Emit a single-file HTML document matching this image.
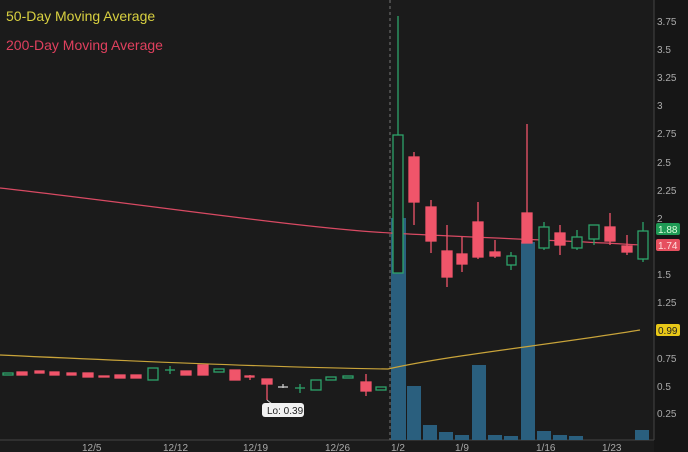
<!DOCTYPE html><html><head><style>body{margin:0;background:#1b1b1b}svg{display:block}text{font-family:"Liberation Sans",sans-serif}</style></head><body>
<svg width="688" height="452" viewBox="0 0 688 452">
<rect width="688" height="452" fill="#1b1b1b"/>
<rect x="654" y="0" width="34" height="452" fill="#161616"/>
<line x1="654" y1="0" x2="654" y2="440" stroke="#444" stroke-width="1"/>
<line x1="0" y1="440" x2="654" y2="440" stroke="#444"/>
<line x1="390" y1="0" x2="390" y2="440" stroke="#777" stroke-dasharray="3,3"/>
<g fill="#2a5f7e">
<rect x="391" y="218" width="15" height="222"/><rect x="407" y="386" width="14" height="54"/><rect x="423" y="425" width="14" height="15"/><rect x="439" y="432" width="14" height="8"/><rect x="455" y="435" width="14" height="5"/><rect x="472" y="365" width="14" height="75"/><rect x="488" y="435" width="14" height="5"/><rect x="504" y="436" width="14" height="4"/><rect x="521" y="242" width="14" height="198"/><rect x="537" y="431" width="14" height="9"/><rect x="553" y="435" width="14" height="5"/><rect x="569" y="436" width="14" height="4"/><rect x="635" y="430" width="14" height="10"/>
</g>
<path d="M0,188 C150,205 300,228 390,233 S560,240 640,245" stroke="#d94a63" fill="none" stroke-width="1.2"/>
<path d="M0,355 C150,362 300,368 388,369 C450,355 550,345 640,330" stroke="#c9a43a" fill="none" stroke-width="1.2"/>
<g stroke="#2ea36a" fill="none" stroke-width="1.3">
<line x1="398" y1="16" x2="398" y2="273"/><rect x="393" y="135" width="10" height="138" fill="#1b1b1b"/>
<line x1="511" y1="252" x2="511" y2="270"/><rect x="507" y="256" width="9" height="9" fill="#1b1b1b"/>
<line x1="544" y1="222" x2="544" y2="250"/><rect x="539" y="227" width="10" height="21" fill="#1b1b1b"/>
<line x1="577" y1="230" x2="577" y2="250"/><rect x="572" y="237" width="10" height="11" fill="#1b1b1b"/>
<line x1="594" y1="225" x2="594" y2="245"/><rect x="589" y="225" width="10" height="14" fill="#1b1b1b"/>
<line x1="643" y1="222" x2="643" y2="262"/><rect x="638" y="231" width="10" height="28" fill="#1b1b1b"/>
<rect x="148" y="368" width="10" height="12" fill="#1b1b1b"/><line x1="165" y1="370" x2="175" y2="370"/><line x1="170" y1="366" x2="170" y2="374"/>
<rect x="214" y="369" width="10" height="3"/><line x1="295" y1="388" x2="305" y2="388"/><line x1="300" y1="384" x2="300" y2="393"/>
<rect x="311" y="380" width="10" height="10" fill="#1b1b1b"/><rect x="326" y="377" width="10" height="3"/><rect x="343" y="376" width="10" height="2"/><rect x="376" y="387" width="10" height="3"/>
<rect x="3" y="373" width="10" height="2"/><line x1="283" y1="388" x2="283" y2="384" stroke="#ccc"/><line x1="278" y1="387" x2="288" y2="387" stroke="#ccc"/>
</g>
<g fill="#f0556a" stroke="#f0556a" stroke-width="1.3">
<line x1="414" y1="152" x2="414" y2="225"/><rect x="409" y="157" width="10" height="45"/>
<line x1="431" y1="200" x2="431" y2="253"/><rect x="426" y="207" width="10" height="34"/>
<line x1="447" y1="225" x2="447" y2="287"/><rect x="442" y="251" width="10" height="26"/>
<line x1="462" y1="237" x2="462" y2="272"/><rect x="457" y="254" width="10" height="10"/>
<line x1="478" y1="202" x2="478" y2="259"/><rect x="473" y="222" width="10" height="35"/>
<line x1="495" y1="240" x2="495" y2="258"/><rect x="490" y="252" width="10" height="4"/>
<line x1="527" y1="124" x2="527" y2="243"/><rect x="522" y="213" width="10" height="30"/>
<line x1="560" y1="225" x2="560" y2="255"/><rect x="555" y="233" width="10" height="12"/>
<line x1="610" y1="213" x2="610" y2="245"/><rect x="605" y="227" width="10" height="14"/>
<line x1="627" y1="235" x2="627" y2="255"/><rect x="622" y="246" width="10" height="6"/>
<rect x="17" y="372" width="10" height="3"/><rect x="35" y="371" width="9" height="2"/><rect x="50" y="372" width="9" height="3"/><rect x="67" y="373" width="9" height="2"/><rect x="83" y="373" width="10" height="4"/><rect x="99" y="376" width="10" height="1"/><rect x="115" y="375" width="10" height="3"/><rect x="131" y="375" width="10" height="3"/>
<rect x="181" y="371" width="10" height="4"/><rect x="198" y="365" width="10" height="10"/><rect x="230" y="370" width="10" height="10"/><line x1="250" y1="375" x2="250" y2="380"/><rect x="245" y="376" width="9" height="1"/>
<line x1="267" y1="380" x2="267" y2="400"/><rect x="262" y="379" width="10" height="5"/>
<line x1="366" y1="374" x2="366" y2="396"/><rect x="361" y="382" width="10" height="9"/>
</g>
<line x1="267" y1="400" x2="272" y2="404" stroke="#ccc"/>
<rect x="262" y="403" width="42" height="14" rx="3" fill="#f2f2f2"/>
<text x="267" y="414" font-size="10" fill="#222">Lo: 0.39</text>
<text x="6" y="21" font-size="14" fill="#d8d040">50-Day Moving Average</text>
<text x="6" y="50" font-size="14" fill="#e0405e">200-Day Moving Average</text>
<g font-size="10" fill="#aaa">
<text x="657" y="25">3.75</text><text x="657" y="53">3.5</text><text x="657" y="81">3.25</text><text x="657" y="109">3</text><text x="657" y="137">2.75</text><text x="657" y="166">2.5</text><text x="657" y="194">2.25</text><text x="657" y="222">2</text><text x="657" y="278">1.5</text><text x="657" y="306">1.25</text><text x="657" y="362">0.75</text><text x="657" y="390">0.5</text><text x="657" y="417">0.25</text>
<text x="82" y="451">12/5</text><text x="163" y="451">12/12</text><text x="243" y="451">12/19</text><text x="325" y="451">12/26</text><text x="391" y="451">1/2</text><text x="455" y="451">1/9</text><text x="536" y="451">1/16</text><text x="602" y="451">1/23</text>
</g>
<rect x="656" y="223" width="24" height="12" rx="2" fill="#1f9a55"/><text x="658" y="233" font-size="10" fill="#dfd">1.88</text>
<rect x="656" y="239" width="24" height="12" rx="2" fill="#e6505f"/><text x="658" y="249" font-size="10" fill="#fdd">1.74</text>
<rect x="656" y="324" width="24" height="12" rx="2" fill="#e8c818"/><text x="658" y="334" font-size="10" fill="#222">0.99</text>
</svg></body></html>
